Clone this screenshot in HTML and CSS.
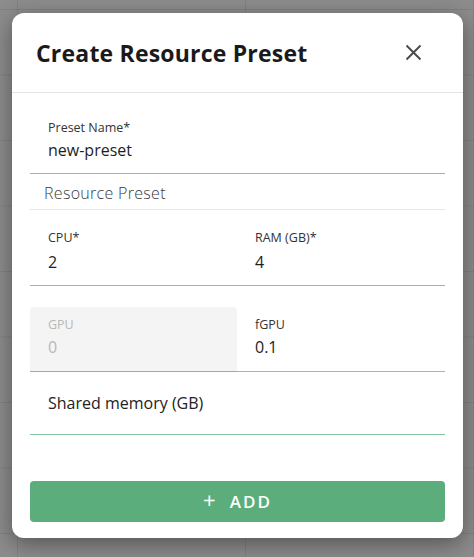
FILE: index.html
```html
<!DOCTYPE html>
<html lang="en">
<head>
<meta charset="utf-8">
<title>Create Resource Preset</title>
<link rel="stylesheet" href="styles.css">
</head>
<body>
<div class="backdrop">
  <div class="dialog">
    <div class="dialog-header">
      <h2 class="dialog-title">Create Resource Preset</h2>
      <button class="close-btn" aria-label="Close">
        <svg width="17" height="17" viewBox="0 0 17 17"><path d="M1.5 1.5 L15.5 15.5 M15.5 1.5 L1.5 15.5" stroke="#4a4a4a" stroke-width="1.9" fill="none"/></svg>
      </button>
    </div>
    <div class="dialog-body">
      <div class="field field-name">
        <div class="field-label">Preset Name*</div>
        <div class="field-value">new-preset</div>
      </div>
      <div class="section-title">Resource Preset</div>
      <div class="row row-cpu">
        <div class="cell">
          <div class="field-label">CPU*</div>
          <div class="field-value">2</div>
        </div>
        <div class="cell">
          <div class="field-label">RAM (GB)*</div>
          <div class="field-value">4</div>
        </div>
      </div>
      <div class="row row-gpu">
        <div class="cell cell-disabled">
          <div class="field-label">GPU</div>
          <div class="field-value">0</div>
        </div>
        <div class="cell cell-active">
          <div class="field-label">fGPU</div>
          <div class="field-value">0.1</div>
        </div>
      </div>
      <div class="field field-shm">
        <div class="field-placeholder">Shared memory (GB)</div>
      </div>
      <button class="add-btn"><span class="plus">+</span><span class="add-text">ADD</span></button>
    </div>
  </div>
</div>
</body>
</html>
```
FILE: styles.css
```css
html, body {
  margin: 0;
  padding: 0;
}
body {
  width: 474px;
  height: 557px;
  overflow: hidden;
  font-family: "Open Sans", "Noto Sans", sans-serif;
  background-color: #8c8c8c;
  background-image:
    linear-gradient(to bottom, rgba(0,0,0,0.08) 1px, transparent 1px),
    linear-gradient(to right, rgba(0,0,0,0.08) 1px, transparent 1px);
  background-size: 100% 65.5px, 228px 100%;
  background-position: 0 9px, 17px 0;
}
.backdrop {
  padding: 13px 0 0 12px;
}
.dialog {
  width: 451px;
  height: 525px;
  box-sizing: border-box;
  background: #fff;
  border-radius: 12px;
  box-shadow: 0 6px 22px rgba(0,0,0,0.4);
  overflow: hidden;
}
.dialog-header {
  height: 79px;
  border-bottom: 1px solid #e4e4e4;
  display: flex;
  align-items: center;
  justify-content: space-between;
  padding: 0 41px 0 24px;
}
.dialog-title {
  margin: 0;
  font-size: 23px;
  font-weight: 700;
  color: #1a1a1a;
  letter-spacing: 0.2px;
}
.close-btn {
  border: 0;
  background: none;
  padding: 0;
  width: 17px;
  height: 17px;
  display: flex;
}
.dialog-body {
  padding: 0 18px;
  display: flex;
  flex-direction: column;
}
.field-label {
  font-size: 12.5px;
  line-height: 16px;
  color: #333;
}
.field-value {
  font-size: 16px;
  line-height: 20px;
  color: #1e1e1e;
}
.field-name {
  padding: 27px 18px 13px;
  border-bottom: 1px solid #86c7a3;
  display: flex;
  flex-direction: column;
  gap: 4px;
}
.section-title {
  padding: 9px 14px 6px;
  font-size: 16px;
  line-height: 20px;
  font-weight: 300;
  color: #3a3a3a;
  letter-spacing: 0.3px;
  border-bottom: 1px solid #e6e6e6;
}
.row {
  display: grid;
  grid-template-columns: 207px 208px;
}
.cell {
  display: flex;
  flex-direction: column;
  padding-left: 18px;
}
.row-cpu {
  border-bottom: 1px solid #86c7a3;
}
.row-cpu .cell {
  padding-top: 20px;
  padding-bottom: 13px;
  gap: 6px;
}
.row-gpu {
  margin-top: 21px;
}
.row-gpu .cell {
  padding-top: 10px;
  padding-bottom: 14px;
  gap: 4px;
}
.cell-disabled {
  background: #f4f4f4;
  border-radius: 4px 4px 0 0;
  border-bottom: 1px solid #a8a8a8;
}
.cell-disabled .field-label,
.cell-disabled .field-value {
  color: #b8b8b8;
}
.cell-active {
  border-bottom: 1px solid #86c7a3;
}
.field-shm {
  padding: 21px 18px 21px;
  border-bottom: 1px solid #86c7a3;
}
.field-placeholder {
  font-size: 16px;
  line-height: 20px;
  color: #222;
}
.add-btn {
  margin-top: 46px;
  height: 41px;
  border: 0;
  border-radius: 4px;
  background: #5bae7c;
  color: #fff;
  font-family: "Open Sans", "Noto Sans", sans-serif;
  display: flex;
  align-items: center;
  justify-content: center;
  gap: 14px;
  padding: 0;
}
.plus {
  font-size: 22px;
  font-weight: 400;
  line-height: 20px;
  position: relative;
  top: -3px;
}
.add-text {
  font-size: 17px;
  font-weight: 600;
  letter-spacing: 2px;
}
```
